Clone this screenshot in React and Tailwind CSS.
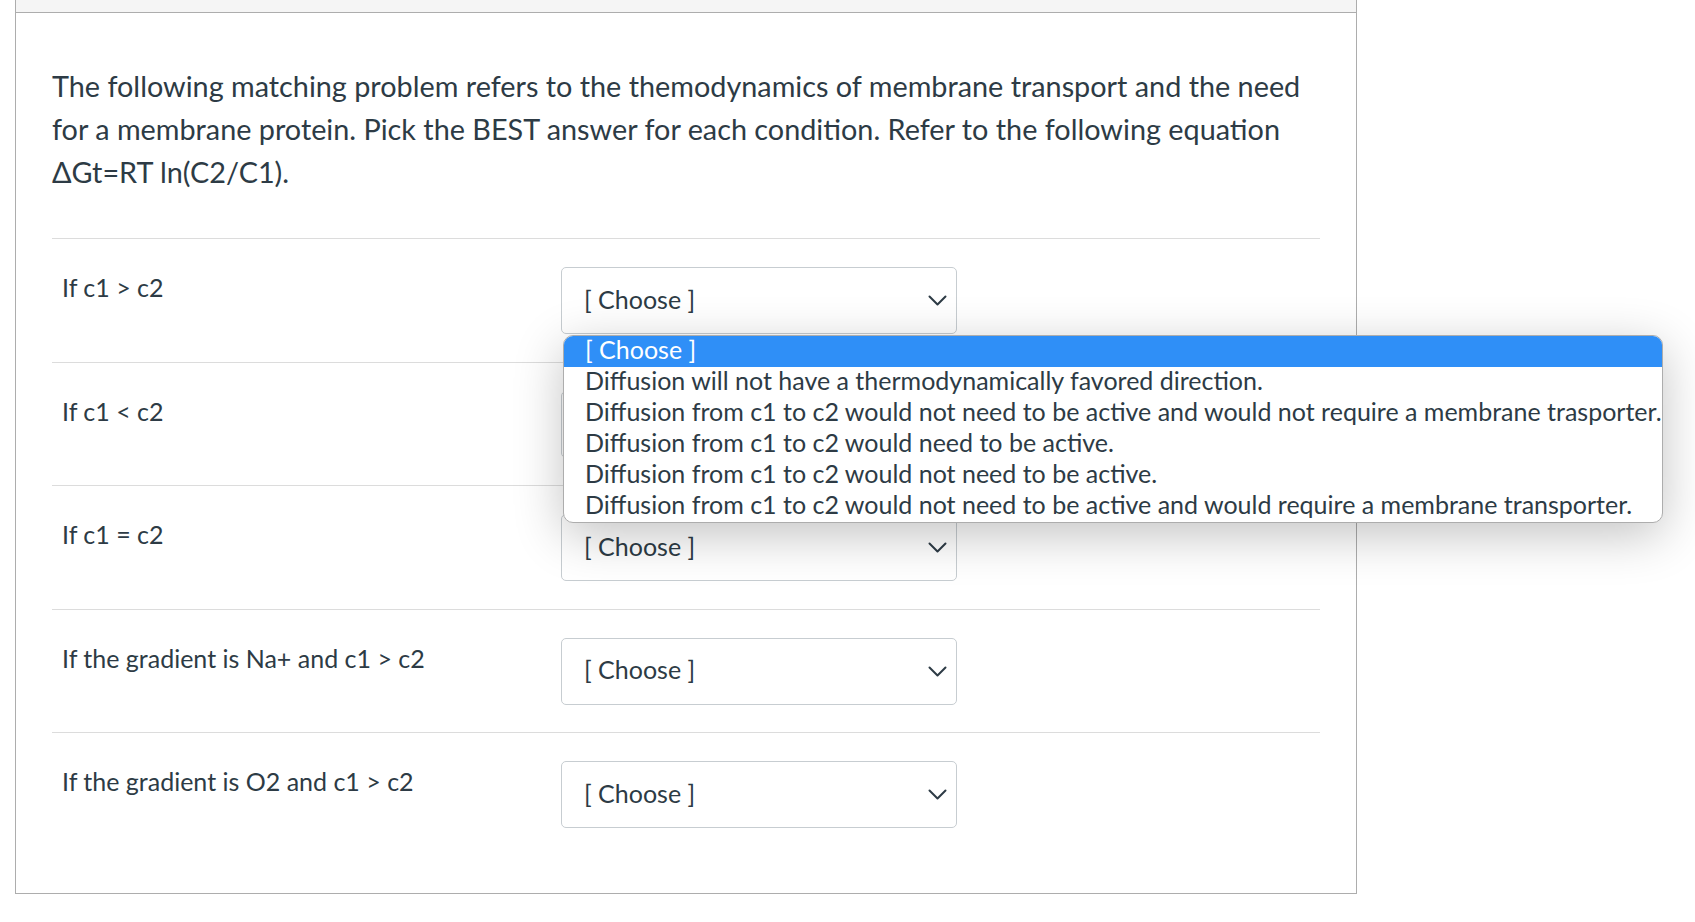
import React from 'react';

const rows = [
  'If c1 > c2',
  'If c1 < c2',
  'If c1 = c2',
  'If the gradient is Na+ and c1 > c2',
  'If the gradient is O2 and c1 > c2',
];

const options = [
  '[ Choose ]',
  'Diffusion will not have a thermodynamically favored direction.',
  'Diffusion from c1 to c2 would not need to be active and would not require a membrane trasporter.',
  'Diffusion from c1 to c2 would need to be active.',
  'Diffusion from c1 to c2 would not need to be active.',
  'Diffusion from c1 to c2 would not need to be active and would require a membrane transporter.',
];

function Chevron() {
  return (
    <svg viewBox="0 0 19 11" className="w-[19px] h-[11px]" fill="none">
      <path d="M1.5 1.5 L9.5 9.5 L17.5 1.5" stroke="#2d3b45" strokeWidth="2" strokeLinecap="round" strokeLinejoin="round" />
    </svg>
  );
}

function Select({ open }) {
  return (
    <div className="relative">
      <div className="w-[396px] h-[67px] border border-[#c7cdd1] rounded-[5px] bg-white flex items-center justify-between pl-[22px] pr-[9px]">
        <span className="text-[25px] text-[#2d3b45] -mt-[2px]">[ Choose ]</span>
        <Chevron />
      </div>
      {open && (
        <div className="absolute left-[2px] top-[68px] z-10 w-[1100px] bg-white border-[1.5px] border-[#adadad] rounded-[10px] overflow-hidden shadow-[0_12px_50px_rgba(0,0,0,0.24)]">
          {options.map((o, i) => (
            <div
              key={i}
              className={
                i === 0
                  ? 'h-[31px] leading-[26px] pl-[21px] text-[25px] whitespace-nowrap bg-[#2f8ff7] text-white'
                  : 'h-[31px] leading-[26px] pl-[21px] text-[25px] whitespace-nowrap text-[#2d3b45]'
              }
            >
              {o}
            </div>
          ))}
        </div>
      )}
    </div>
  );
}

export default function App() {
  return (
    <div className="min-h-[922px] bg-white font-['Lato','Liberation_Sans',sans-serif] text-[#2d3b45] pl-[15px]">
      <div className="w-[1342px] border-l border-r border-b border-[#adadad]">
        {/* header strip cut off at top */}
        <div className="h-[13px] bg-[#f5f5f5] border-b border-[#adadad]" />

        <div className="pt-[52px] px-[36px] pb-[37px]">
          <p className="text-[28.8px] leading-[43px] mb-[44px]">
            The following matching problem refers to the themodynamics of membrane transport and the need for a membrane protein. Pick the BEST answer for each condition. Refer to the following equation ΔGt=RT ln(C2/C1).
          </p>

          {rows.map((label, i) => (
            <div key={i} className="flex border-t border-[#dcdcdc] pt-[28px] pb-[27.5px]">
              <div className="w-[509px] pl-[10px] pt-[3px] text-[25px] leading-[34px]">{label}</div>
              <Select open={i === 0} />
            </div>
          ))}
        </div>
      </div>
    </div>
  );
}
